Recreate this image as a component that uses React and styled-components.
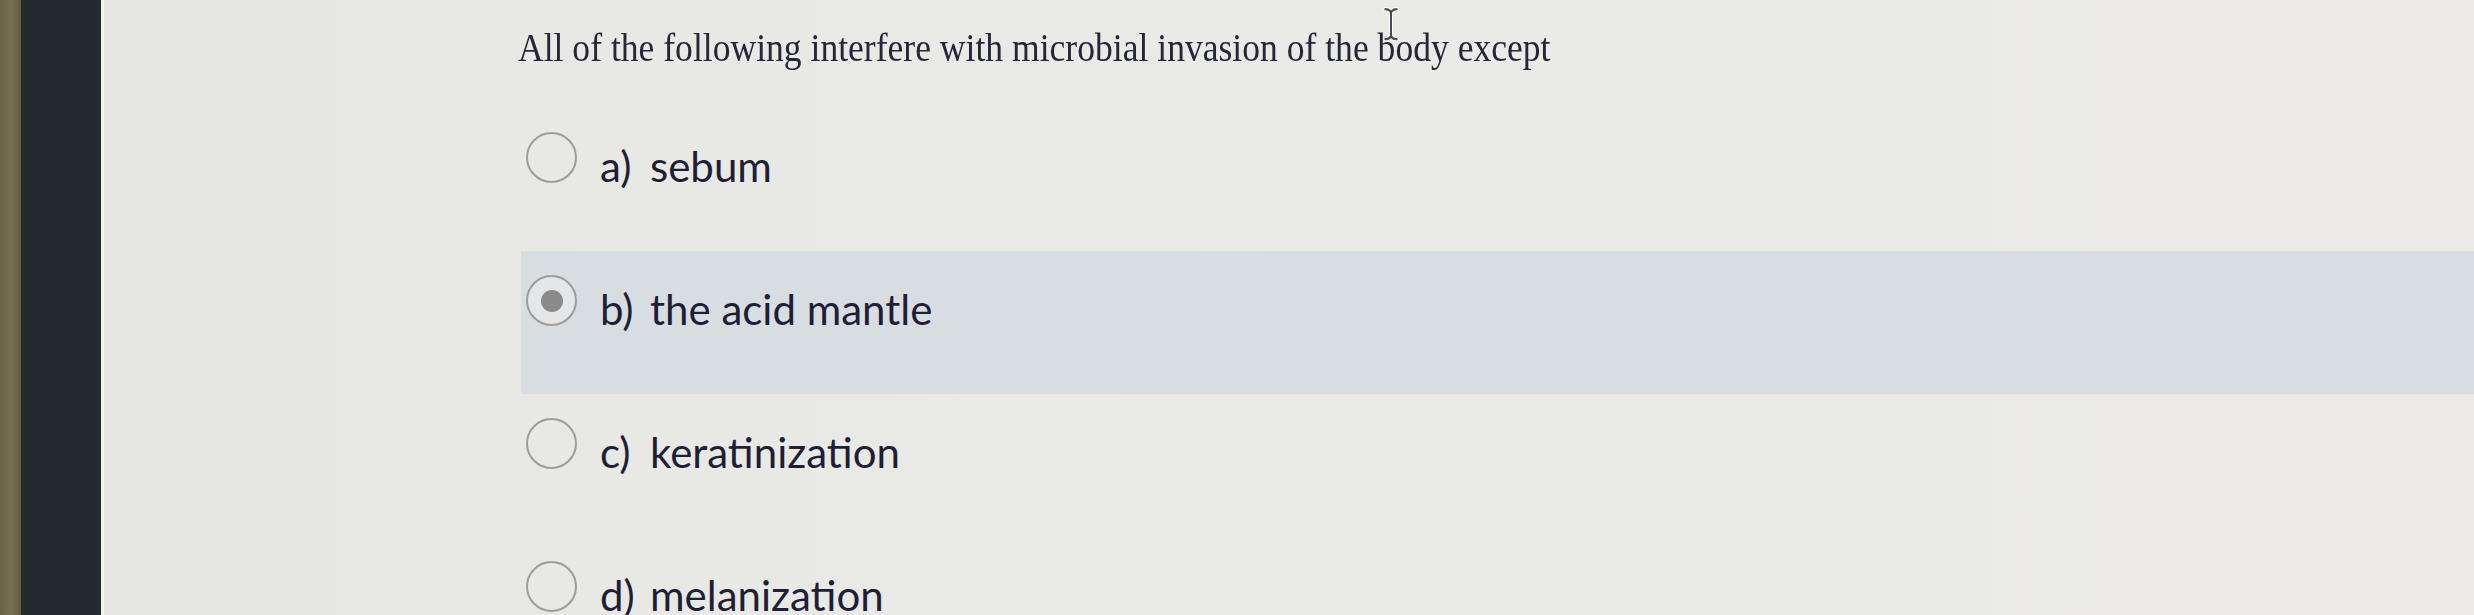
import React, { useState } from "react";
import styled, { createGlobalStyle } from "styled-components";

const GlobalStyle = createGlobalStyle`
  html, body {
    margin: 0;
    padding: 0;
    background: #e9e9e6;
    overflow: hidden;
  }
  #root {
    height: 615px;
  }
`;

const options = [
  { key: "a", text: "sebum" },
  { key: "b", text: "the acid mantle" },
  { key: "c", text: "keratinization" },
  { key: "d", text: "melanization" },
];

export default function App() {
  const [selected, setSelected] = useState("b");

  return (
    <>
      <GlobalStyle />
      <ScPage>
        <ScBezel>
          <ScDesk />
          <ScFrame />
        </ScBezel>
        <ScScreen>
          <ScQuestion>
            All of the following interfere with microbial invasion of the body except
            <TextCursor />
          </ScQuestion>
          <ScOptionList>
            {options.map(opt => (
              <ScOption
                key={opt.key}
                $active={selected === opt.key}
                onClick={() => setSelected(opt.key)}
              >
                <ScRadio $checked={selected === opt.key} />
                <ScLabel>
                  <ScLetter>{opt.key})</ScLetter>
                  {opt.text}
                </ScLabel>
              </ScOption>
            ))}
          </ScOptionList>
        </ScScreen>
      </ScPage>
    </>
  );
}

const TextCursor = () => (
  <ScCursor width="18" height="30" viewBox="0 0 18 32">
    <path
      d="M3 2 C6 2 8 3 9 5 C10 3 12 2 15 2 M9 5 V27 M3 30 C6 30 8 29 9 27 C10 29 12 30 15 30"
      fill="none"
      stroke="#fff"
      strokeWidth="4"
      strokeLinecap="round"
    />
    <path
      d="M3 2 C6 2 8 3 9 5 C10 3 12 2 15 2 M9 5 V27 M3 30 C6 30 8 29 9 27 C10 29 12 30 15 30"
      fill="none"
      stroke="#4a4a52"
      strokeWidth="2.2"
      strokeLinecap="round"
    />
  </ScCursor>
);

const ScPage = styled.div`
  display: flex;
  width: 2474px;
  height: 615px;
  overflow: hidden;
`;

const ScBezel = styled.div`
  display: flex;
  flex-shrink: 0;
`;

const ScDesk = styled.div`
  width: 21px;
  background: linear-gradient(90deg, #6a6348 0%, #777052 55%, #5e583f 100%);
`;

const ScFrame = styled.div`
  width: 80px;
  background: #252a2e;
  border-right: 3px solid #f4f4f2;
`;

const ScScreen = styled.div`
  flex: 1;
  display: flex;
  flex-direction: column;
  padding: 26px 0 0 417px;
  background: linear-gradient(90deg, #e7e7e4 0%, #eaeae7 60%, #ecebe8 100%);
`;

const ScQuestion = styled.div`
  position: relative;
  align-self: flex-start;
  font-family: "Liberation Serif", "Times New Roman", serif;
  font-size: 35.6px;
  line-height: 43px;
  color: #26263a;
  transform-origin: left center;
  transform: scaleY(1.14);
  margin-left: -3px;
`;

const ScCursor = styled.svg`
  position: absolute;
  left: 864px;
  top: -14px;
`;

const ScOptionList = styled.div`
  display: flex;
  flex-direction: column;
  margin-top: 39px;
`;

const ScOption = styled.div`
  display: flex;
  align-items: flex-start;
  height: 143px;
  box-sizing: border-box;
  padding: 24px 0 0 5px;
  background: ${({ $active }) => ($active ? "#d8dde2" : "transparent")};
  cursor: pointer;
`;

const ScRadio = styled.span`
  position: relative;
  flex-shrink: 0;
  width: 51px;
  height: 51px;
  box-sizing: border-box;
  border-radius: 50%;
  border: 2px solid #9c9c9c;
  background: ${({ $checked }) => ($checked ? "#e4e6e8" : "#e8e8e5")};

  &::after {
    content: "";
    display: ${({ $checked }) => ($checked ? "block" : "none")};
    position: absolute;
    left: 50%;
    top: 50%;
    width: 22px;
    height: 22px;
    margin: -11px 0 0 -11px;
    border-radius: 50%;
    background: #8a8a8a;
  }
`;

const ScLabel = styled.span`
  display: flex;
  margin: 9px 0 0 23px;
  font-family: Lato, "Open Sans", sans-serif;
  font-size: 42px;
  line-height: 50px;
  color: #1e1f36;
`;

const ScLetter = styled.span`
  width: 50px;
`;
